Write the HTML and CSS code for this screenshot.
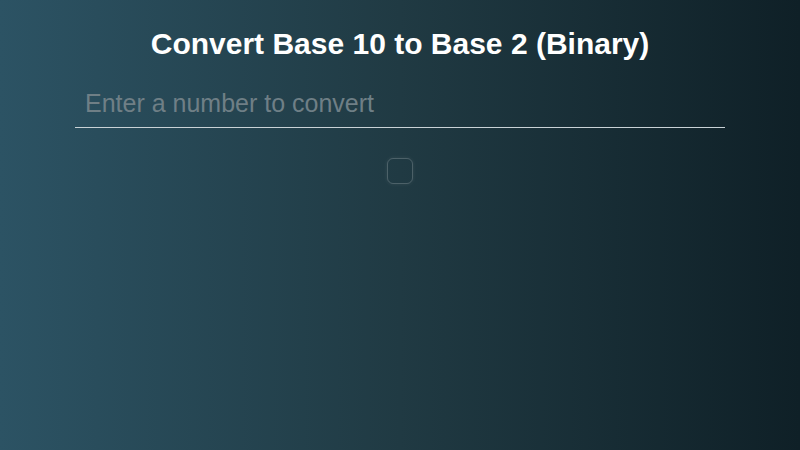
FILE: index.html
```html
<!DOCTYPE html>
<html lang="en">
<head>
  <meta charset="UTF-8">
  <title>Base 10 to Base 2</title>
  <meta name="viewport" content="width=device-width, initial-scale=1.0">
  <link rel="stylesheet" href="styles.css">
</head>
<body>
  <div class="container">
    <h1>Convert Base 10 to Base 2 (Binary)</h1>
    <input type="text" class="number-input" id="decimal" placeholder="Enter a number to convert">
    <div class="result-wrap">
      <div class="result" id="result"></div>
    </div>
  </div>
</body>
</html>
```

FILE: styles.css
```css
html, body { height: 100%; }
body { margin: 0; background: linear-gradient(to right, #2c5364, #203a43, #0f2027); color: #fff; font-family: 'Liberation Sans', Arial, sans-serif; }
.container { max-width: 650px; margin: 0 auto; padding-top: 27px; }
h1 { font-size: 30px; font-weight: bold; text-align: center; margin: 0 0 18px 0; }
.number-input { display: block; box-sizing: border-box; width: 100%; background: transparent; border: none; border-bottom: 1px solid #c9d2d6; padding: 10px 10px 9px; font-size: 25px; font-family: inherit; color: #fff; outline: none; }
.number-input::placeholder { color: #6f7f86; }
.result-wrap { display: flex; justify-content: center; margin-top: 30px; }
.result { padding: 12px; border: 1px solid rgba(255, 255, 255, 0.2); border-radius: 6px; box-shadow: 0 0 4px rgba(255, 255, 255, 0.08); font-size: 20px; }
```
